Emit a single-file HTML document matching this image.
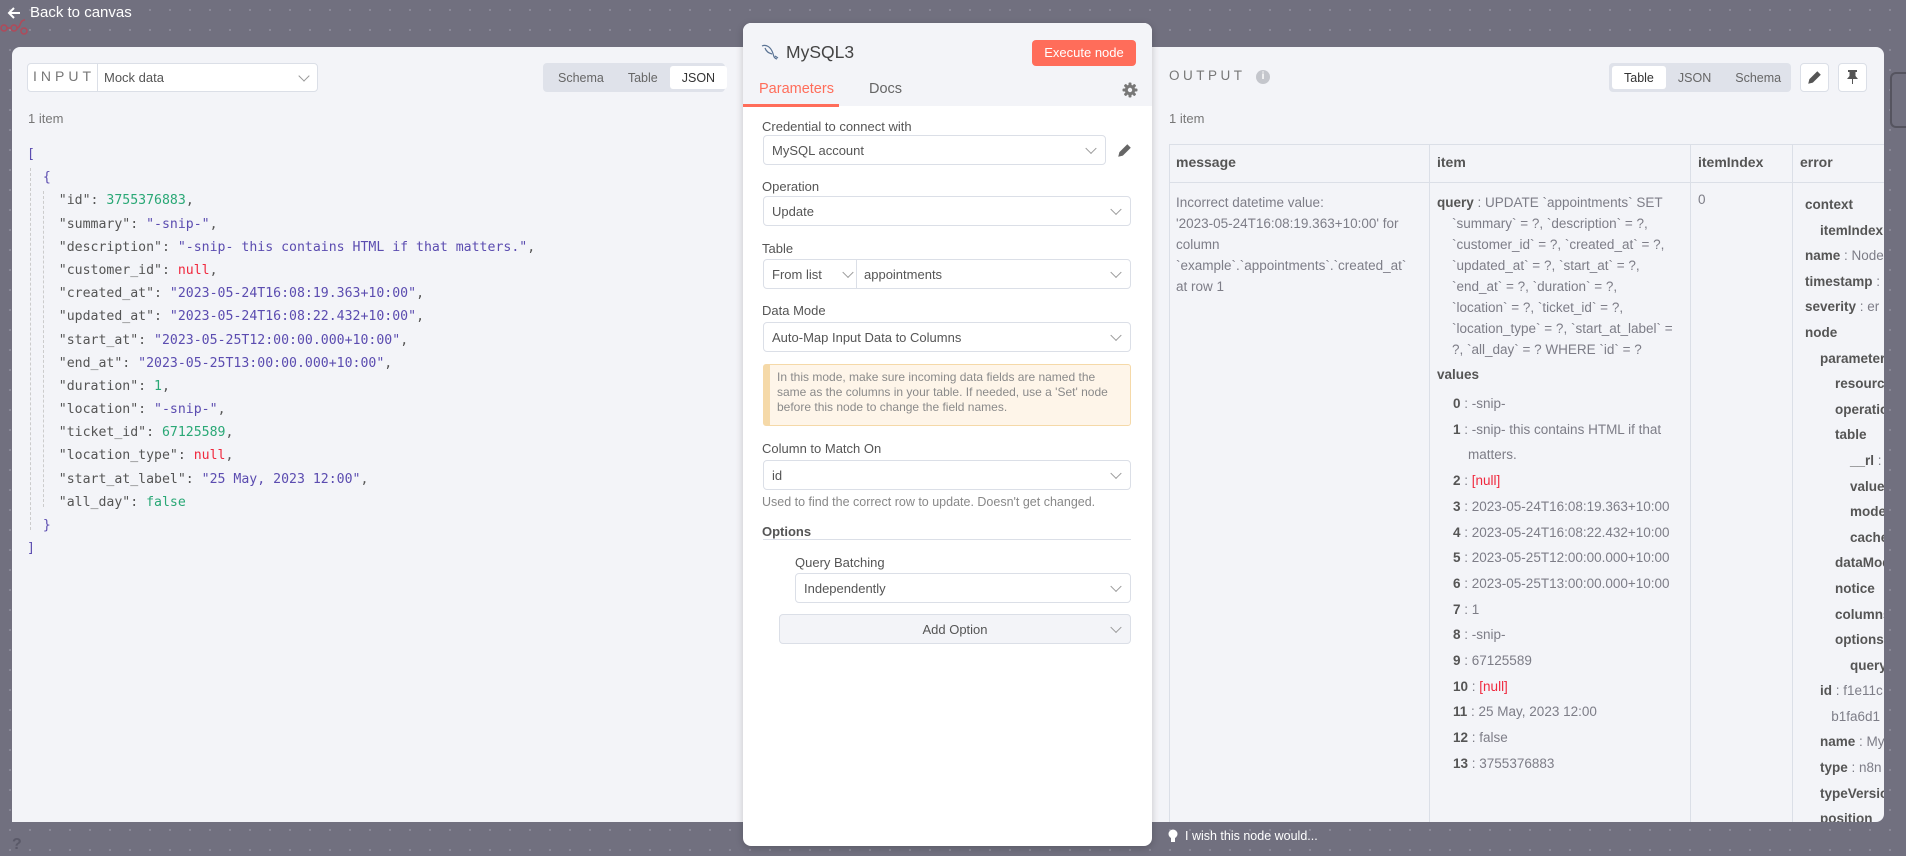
<!DOCTYPE html>
<html><head><meta charset="utf-8">
<style>
*{box-sizing:border-box;margin:0;padding:0}
body{width:1906px;height:856px;overflow:hidden;background:#71707f;font-family:"Liberation Sans",sans-serif;position:relative;
background-image:radial-gradient(circle,#8a8998 1px,transparent 1.2px);background-size:20px 20px}
.a{position:absolute}
.lbl{position:absolute;left:762px;font-size:13px;color:#555}
.sel{position:absolute;background:#fff;border:1px solid #dbdfe7;border-radius:4px;font-size:13px;color:#555;padding-left:8px;display:flex;align-items:center}
.chev{position:absolute;right:10px;top:50%;width:8px;height:8px;border-right:1px solid #999;border-bottom:1px solid #999;transform:translateY(-70%) rotate(45deg)}
.mono{font-family:"DejaVu Sans Mono","Liberation Mono",monospace;font-size:13.2px;color:#555;position:absolute}
.mono div{height:23.2px;line-height:23.2px;white-space:pre}
.s{color:#5b4cb0}.n{color:#2aa876}.nl{color:#f0293e}
.tabs{position:absolute;background:#dfe2ea;border-radius:4px;display:flex;padding:3px;gap:0;font-size:12.5px;color:#666}
.tabs div{padding:0 12px;display:flex;align-items:center;border-radius:3px}
.tabs .on{background:#fff;color:#333}
.t{position:absolute;font-size:13.5px;color:#7d7d87;white-space:nowrap}
.t b{color:#555;font-weight:bold}
.k{position:absolute;font-size:13.5px;color:#555;font-weight:bold;white-space:nowrap}
</style></head><body>

<svg class="a" style="left:6px;top:5px" width="16" height="16" viewBox="0 0 16 16"><path d="M14 8H3M8 3L3 8l5 5" stroke="#fff" stroke-width="2" fill="none"/></svg>
<div class="a" style="left:30px;top:4px;color:#fff;font-size:15px">Back to canvas</div>
<svg class="a" style="left:0;top:18px" width="36" height="18"><g stroke="#b04a5a" fill="none" stroke-width="1.5"><circle cx="4" cy="10" r="3"/><circle cx="14" cy="10" r="3"/><circle cx="24" cy="13" r="3"/><path d="M7 10h4M17 10c4 0 2-8 8-8"/></g></svg>
<div class="a" style="left:12px;top:836px;color:#5a5968;font-size:16px;font-weight:bold">?</div>

<!-- left panel -->
<div class="a" style="left:12px;top:47px;width:740px;height:775px;background:#f3f4f8;border-radius:8px 0 0 0"></div>
<div class="a" style="left:27px;top:63px;width:291px;height:29px;background:#fff;border:1px solid #dbdfe7;border-radius:4px"></div>
<div class="a" style="left:33px;top:68px;font-size:14px;color:#777;letter-spacing:4px">INPUT</div>
<div class="a" style="left:97px;top:64px;width:1px;height:27px;background:#dbdfe7"></div>
<div class="a" style="left:104px;top:70px;font-size:13px;color:#555">Mock data</div>
<div class="a" style="left:300px;top:72px;width:8px;height:8px;border-right:1px solid #999;border-bottom:1px solid #999;transform:rotate(45deg)"></div>
<div class="tabs" style="left:543px;top:63px;width:182px;height:29px"><div>Schema</div><div>Table</div><div class="on">JSON</div></div>
<div class="a" style="left:28px;top:111px;font-size:13px;color:#777">1 item</div>

<div class="a" style="left:30px;top:168px;height:362px;border-left:1px dashed #ccc"></div>
<div class="a" style="left:43px;top:191px;height:316px;border-left:1px dashed #ccc"></div>
<div class="mono" style="left:27px;top:143px"><div><span class="s">[</span></div><div>  <span class="s">{</span></div><div>    "id": <span class="n">3755376883</span>,</div><div>    "summary": <span class="s">"-snip-"</span>,</div><div>    "description": <span class="s">"-snip- this contains HTML if that matters."</span>,</div><div>    "customer_id": <span class="nl">null</span>,</div><div>    "created_at": <span class="s">"2023-05-24T16:08:19.363+10:00"</span>,</div><div>    "updated_at": <span class="s">"2023-05-24T16:08:22.432+10:00"</span>,</div><div>    "start_at": <span class="s">"2023-05-25T12:00:00.000+10:00"</span>,</div><div>    "end_at": <span class="s">"2023-05-25T13:00:00.000+10:00"</span>,</div><div>    "duration": <span class="n">1</span>,</div><div>    "location": <span class="s">"-snip-"</span>,</div><div>    "ticket_id": <span class="n">67125589</span>,</div><div>    "location_type": <span class="nl">null</span>,</div><div>    "start_at_label": <span class="s">"25 May, 2023 12:00"</span>,</div><div>    "all_day": <span class="n">false</span></div><div>  <span class="s">}</span></div><div><span class="s">]</span></div></div>

<!-- output panel -->
<div class="a" style="left:1152px;top:47px;width:732px;height:775px;background:#f3f4f8;border-radius:0 8px 8px 0;overflow:hidden">
  <div class="a" style="left:17px;top:21px;font-size:13.5px;color:#777;letter-spacing:3.5px">OUTPUT</div>
  <div class="a" style="left:104px;top:23px;width:14px;height:14px;border-radius:50%;background:#c4c6cc;color:#fff;font-size:10px;text-align:center;line-height:14px;font-weight:bold">i</div>
  <div class="a" style="left:17px;top:64px;font-size:13px;color:#777">1 item</div>
  <div class="tabs" style="left:457px;top:16px;width:182px;height:29px"><div class="on">Table</div><div>JSON</div><div>Schema</div></div>
  <div class="a" style="left:648px;top:16px;width:29px;height:29px;background:#fff;border:1px solid #dbdfe7;border-radius:4px"></div>
  <svg class="a" style="left:655px;top:23px" width="15" height="15" viewBox="0 0 16 16"><path d="M2 14l1-4 8-8 3 3-8 8zM10 3l3 3" fill="#555" stroke="#555"/></svg>
  <div class="a" style="left:686px;top:16px;width:29px;height:29px;background:#fff;border:1px solid #dbdfe7;border-radius:4px"></div>
  <svg class="a" style="left:693px;top:22px" width="15" height="16" viewBox="0 0 15 16"><path d="M3 1h9v2h-1.5v4l2.5 3H2l2.5-3V3H3z M7 10h1v5H7z" fill="#555"/></svg>
  <div class="a" style="left:17px;top:97px;width:800px;height:700px;border:1px solid #dbdfe7"></div>
  <div class="a" style="left:17px;top:135px;width:800px;height:1px;background:#dbdfe7"></div>
  <div class="a" style="left:277px;top:97px;width:1px;height:700px;background:#dbdfe7"></div>
  <div class="a" style="left:538px;top:97px;width:1px;height:700px;background:#dbdfe7"></div>
  <div class="a" style="left:640px;top:97px;width:1px;height:700px;background:#dbdfe7"></div>
  <div class="k" style="left:24px;top:107px;font-size:14px">message</div>
  <div class="k" style="left:285px;top:107px;font-size:14px">item</div>
  <div class="k" style="left:546px;top:107px;font-size:14px">itemIndex</div>
  <div class="k" style="left:648px;top:107px;font-size:14px">error</div>
  <div class="t" style="left:24px;top:145px;line-height:21px">Incorrect datetime value:<br>'2023-05-24T16:08:19.363+10:00' for<br>column<br>`example`.`appointments`.`created_at`<br>at row 1</div>
  <div class="t" style="left:285px;top:145px;line-height:21px"><b>query</b> : UPDATE `appointments` SET<br>&nbsp;&nbsp;&nbsp;&nbsp;`summary` = ?, `description` = ?,<br>&nbsp;&nbsp;&nbsp;&nbsp;`customer_id` = ?, `created_at` = ?,<br>&nbsp;&nbsp;&nbsp;&nbsp;`updated_at` = ?, `start_at` = ?,<br>&nbsp;&nbsp;&nbsp;&nbsp;`end_at` = ?, `duration` = ?,<br>&nbsp;&nbsp;&nbsp;&nbsp;`location` = ?, `ticket_id` = ?,<br>&nbsp;&nbsp;&nbsp;&nbsp;`location_type` = ?, `start_at_label` =<br>&nbsp;&nbsp;&nbsp;&nbsp;?, `all_day` = ? WHERE `id` = ?</div>
  <div class="k" style="left:285px;top:320px">values</div>
  <div class="t" style="left:301px;top:344px;line-height:25.7px"><b>0</b> : -snip-<br><b>1</b> : -snip- this contains HTML if that<br>&nbsp;&nbsp;&nbsp;&nbsp;matters.<br><b>2</b> : <span style="color:#f0293e">[null]</span><br><b>3</b> : 2023-05-24T16:08:19.363+10:00<br><b>4</b> : 2023-05-24T16:08:22.432+10:00<br><b>5</b> : 2023-05-25T12:00:00.000+10:00<br><b>6</b> : 2023-05-25T13:00:00.000+10:00<br><b>7</b> : 1<br><b>8</b> : -snip-<br><b>9</b> : 67125589<br><b>10</b> : <span style="color:#f0293e">[null]</span><br><b>11</b> : 25 May, 2023 12:00<br><b>12</b> : false<br><b>13</b> : 3755376883</div>
  <div class="t" style="left:546px;top:145px">0</div>
  <div class="t" style="left:653px;top:145px;line-height:25.6px"><b>context</b><br>&nbsp;&nbsp;&nbsp;&nbsp;<b>itemIndex</b><br><b>name</b> : Node<br><b>timestamp</b> :<br><b>severity</b> : er<br><b>node</b><br>&nbsp;&nbsp;&nbsp;&nbsp;<b>parameters</b><br>&nbsp;&nbsp;&nbsp;&nbsp;&nbsp;&nbsp;&nbsp;&nbsp;<b>resource</b><br>&nbsp;&nbsp;&nbsp;&nbsp;&nbsp;&nbsp;&nbsp;&nbsp;<b>operation</b><br>&nbsp;&nbsp;&nbsp;&nbsp;&nbsp;&nbsp;&nbsp;&nbsp;<b>table</b><br>&nbsp;&nbsp;&nbsp;&nbsp;&nbsp;&nbsp;&nbsp;&nbsp;&nbsp;&nbsp;&nbsp;&nbsp;<b>__rl</b> :<br>&nbsp;&nbsp;&nbsp;&nbsp;&nbsp;&nbsp;&nbsp;&nbsp;&nbsp;&nbsp;&nbsp;&nbsp;<b>value</b><br>&nbsp;&nbsp;&nbsp;&nbsp;&nbsp;&nbsp;&nbsp;&nbsp;&nbsp;&nbsp;&nbsp;&nbsp;<b>mode</b><br>&nbsp;&nbsp;&nbsp;&nbsp;&nbsp;&nbsp;&nbsp;&nbsp;&nbsp;&nbsp;&nbsp;&nbsp;<b>cache</b><br>&nbsp;&nbsp;&nbsp;&nbsp;&nbsp;&nbsp;&nbsp;&nbsp;<b>dataMode</b><br>&nbsp;&nbsp;&nbsp;&nbsp;&nbsp;&nbsp;&nbsp;&nbsp;<b>notice</b><br>&nbsp;&nbsp;&nbsp;&nbsp;&nbsp;&nbsp;&nbsp;&nbsp;<b>columns</b><br>&nbsp;&nbsp;&nbsp;&nbsp;&nbsp;&nbsp;&nbsp;&nbsp;<b>options</b><br>&nbsp;&nbsp;&nbsp;&nbsp;&nbsp;&nbsp;&nbsp;&nbsp;&nbsp;&nbsp;&nbsp;&nbsp;<b>query</b><br>&nbsp;&nbsp;&nbsp;&nbsp;<b>id</b> : f1e11c<br>&nbsp;&nbsp;&nbsp;&nbsp;&nbsp;&nbsp;&nbsp;b1fa6d1<br>&nbsp;&nbsp;&nbsp;&nbsp;<b>name</b> : My<br>&nbsp;&nbsp;&nbsp;&nbsp;<b>type</b> : n8n<br>&nbsp;&nbsp;&nbsp;&nbsp;<b>typeVersion</b><br>&nbsp;&nbsp;&nbsp;&nbsp;<b>position</b></div>
</div>
<div class="a" style="left:1890px;top:72px;width:16px;height:56px;border:2px solid #55545f;border-right:none;border-radius:6px 0 0 6px"></div>

<svg class="a" style="left:1168px;top:829px" width="10" height="14" viewBox="0 0 10 14"><circle cx="5" cy="5" r="4.5" fill="#fff"/><rect x="3" y="9" width="4" height="4" fill="#fff"/></svg>
<div class="a" style="left:1185px;top:829px;font-size:12.5px;color:#fff">I wish this node would...</div>

<!-- MySQL panel -->
<div class="a" style="left:743px;top:23px;width:409px;height:823px;background:#fff;border-radius:8px;box-shadow:0 2px 8px rgba(0,0,0,.2);overflow:hidden">
  <div class="a" style="left:0;top:0;width:409px;height:83px;background:#f3f4f8"></div>
  <svg class="a" style="left:17px;top:20px" width="20" height="18" viewBox="0 0 20 18"><path d="M2 3c4-2 8 1 10 5s1 7 5 8M5 5c1 3 3 5 7 6M15 13l3 2" stroke="#5a7394" fill="none" stroke-width="1.2"/></svg>
  <div class="a" style="left:43px;top:19px;font-size:17.5px;color:#444">MySQL3</div>
  <div class="a" style="left:289px;top:17px;width:104px;height:26px;background:#ff6d5a;border-radius:4px;color:#fff;font-size:13px;text-align:center;line-height:26px">Execute node</div>
  <div class="a" style="left:16px;top:58px;font-size:14.5px;color:#ff6d5a">Parameters</div>
  <div class="a" style="left:126px;top:58px;font-size:14.5px;color:#666">Docs</div>
  <div class="a" style="left:0;top:81px;width:96px;height:3px;background:#ff6d5a"></div>
  <svg class="a" style="left:379px;top:59px" width="16" height="16" viewBox="0 0 16 16"><g fill="#777"><rect x="6.5" y="0.5" width="3" height="15" rx="1"/><rect x="6.5" y="0.5" width="3" height="15" rx="1" transform="rotate(45 8 8)"/><rect x="6.5" y="0.5" width="3" height="15" rx="1" transform="rotate(90 8 8)"/><rect x="6.5" y="0.5" width="3" height="15" rx="1" transform="rotate(135 8 8)"/><circle cx="8" cy="8" r="5.2"/></g><circle cx="8" cy="8" r="2.2" fill="#f3f4f8"/></svg>
</div>
<div class="lbl" style="top:119px">Credential to connect with</div>
<div class="sel" style="left:763px;top:135px;width:343px;height:30px">MySQL account<div class="chev"></div></div>
<svg class="a" style="left:1117px;top:143px" width="15" height="15" viewBox="0 0 16 16"><path d="M2 14l1-4 8-8 3 3-8 8zM10 3l3 3" fill="#666" stroke="#666"/></svg>
<div class="lbl" style="top:179px">Operation</div>
<div class="sel" style="left:763px;top:196px;width:368px;height:30px">Update<div class="chev"></div></div>
<div class="lbl" style="top:241px">Table</div>
<div class="sel" style="left:763px;top:259px;width:368px;height:30px">From list<div class="chev" style="right:278px"></div><div class="a" style="left:92px;top:0;width:1px;height:28px;background:#dbdfe7"></div><span style="position:absolute;left:100px">appointments</span><div class="chev"></div></div>
<div class="lbl" style="top:303px">Data Mode</div>
<div class="sel" style="left:763px;top:322px;width:368px;height:30px">Auto-Map Input Data to Columns<div class="chev"></div></div>
<div class="a" style="left:763px;top:364px;width:368px;height:62px;background:#fef5e9;border:1px solid #f5d9a8;border-left:7px solid #f5d9a8;border-radius:3px;padding:5px 8px 0 7px;font-size:12px;line-height:15px;color:#8a8a8a">In this mode, make sure incoming data fields are named the same as the columns in your table. If needed, use a 'Set' node before this node to change the field names.</div>
<div class="lbl" style="top:441px">Column to Match On</div>
<div class="sel" style="left:763px;top:460px;width:368px;height:30px">id<div class="chev"></div></div>
<div class="lbl" style="top:495px;color:#888;font-size:12.5px">Used to find the correct row to update. Doesn't get changed.</div>
<div class="lbl" style="top:524px;font-weight:bold">Options</div>
<div class="a" style="left:763px;top:539px;width:368px;height:1px;background:#dbdfe7"></div>
<div class="lbl" style="left:795px;top:555px">Query Batching</div>
<div class="sel" style="left:795px;top:573px;width:336px;height:30px">Independently<div class="chev"></div></div>
<div class="sel" style="left:779px;top:614px;width:352px;height:30px;background:#f3f4f8;justify-content:center;padding:0">Add Option<div class="chev"></div></div>

</body></html>
